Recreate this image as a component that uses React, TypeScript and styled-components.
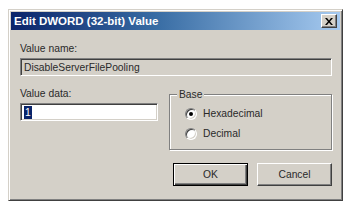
import React from 'react';
import styled, { createGlobalStyle } from 'styled-components';

const GlobalStyle = createGlobalStyle`
  html, body {
    margin: 0;
    padding: 0;
    background: #ffffff;
  }
  body {
    font-family: "Liberation Sans", Arial, sans-serif;
    font-size: 10.3px;
    color: #000000;
  }
`;

const App = () => {
  return (
    <>
      <GlobalStyle />
      <DialogWindow>
        <TitleBar>
          <TitleText>Edit DWORD (32-bit) Value</TitleText>
          <CloseButton>
            <svg width="8" height="7" viewBox="0 0 8 7">
              <path d="M0 0h2l2 2.5L6 0h2L5 3.5 8 7H6L4 4.5 2 7H0l3-3.5z" fill="#000" />
            </svg>
          </CloseButton>
        </TitleBar>
        <Content>
          <FieldLabel>Value name:</FieldLabel>
          <TextField $readOnly>DisableServerFilePooling</TextField>
          <MiddleRow>
            <LeftColumn>
              <FieldLabel>Value data:</FieldLabel>
              <TextField $short>
                <Selected>1</Selected>
              </TextField>
            </LeftColumn>
            <GroupBox>
              <GroupLegend>Base</GroupLegend>
              <RadioRow>
                <RadioCircle $checked />
                <span>Hexadecimal</span>
              </RadioRow>
              <RadioRow>
                <RadioCircle />
                <span>Decimal</span>
              </RadioRow>
            </GroupBox>
          </MiddleRow>
          <ButtonRow>
            <PushButton $default>OK</PushButton>
            <PushButton>Cancel</PushButton>
          </ButtonRow>
        </Content>
      </DialogWindow>
    </>
  );
};

export default App;

const DialogWindow = styled.div`
  margin: 9px 0 0 8px;
  width: 335px;
  height: 192px;
  box-sizing: border-box;
  background: #d4d0c8;
  border-top: 1px solid #d4d0c8;
  border-left: 1px solid #d4d0c8;
  border-right: 1px solid #404040;
  border-bottom: 1px solid #404040;
  box-shadow: inset 1px 1px 0 #ffffff, inset -1px -1px 0 #808080;
  padding: 2px;
  display: flex;
  flex-direction: column;
`;

const TitleBar = styled.div`
  height: 18px;
  display: flex;
  align-items: center;
  justify-content: space-between;
  padding: 0 3px 0 3px;
  background: linear-gradient(to right, #0a246a 0%, #3a6ea5 45%, #a6caf0 100%);
`;

const TitleText = styled.div`
  color: #ffffff;
  font-weight: bold;
  font-size: 11.5px;
`;

const CloseButton = styled.div`
  width: 16px;
  height: 14px;
  box-sizing: border-box;
  display: flex;
  align-items: center;
  justify-content: center;
  background: #d4d0c8;
  border-top: 1px solid #ffffff;
  border-left: 1px solid #ffffff;
  border-right: 1px solid #404040;
  border-bottom: 1px solid #404040;
  box-shadow: inset -1px -1px 0 #808080;
`;

const Content = styled.div`
  display: flex;
  flex-direction: column;
  padding: 12px 8px 0 9px;
`;

const FieldLabel = styled.div`
  line-height: 13px;
  color: #2a2a2a;
`;

const TextField = styled.div<{ $readOnly?: boolean; $short?: boolean }>`
  margin-top: 3px;
  width: ${(p) => (p.$short ? '138px' : '312px')};
  height: 18px;
  box-sizing: border-box;
  display: flex;
  align-items: center;
  padding-left: 3px;
  background: ${(p) => (p.$readOnly ? '#d4d0c8' : '#ffffff')};
  border-top: 1px solid #808080;
  border-left: 1px solid #808080;
  border-right: 1px solid #ffffff;
  border-bottom: 1px solid #ffffff;
  box-shadow: inset 1px 1px 0 #404040, inset -1px -1px 0 #d4d0c8;
  color: #2a2a2a;
`;

const Selected = styled.span`
  background: #0a246a;
  color: #ffffff;
  line-height: 13px;
  padding: 0 1px;
`;

const MiddleRow = styled.div`
  display: flex;
  gap: 11px;
  margin-top: 11px;
`;

const LeftColumn = styled.div`
  display: flex;
  flex-direction: column;
`;

const GroupBox = styled.div`
  position: relative;
  margin-top: 7px;
  width: 164px;
  height: 56px;
  box-sizing: border-box;
  border: 1px solid #808080;
  box-shadow: 1px 1px 0 #ffffff, inset 1px 1px 0 #ffffff;
  display: flex;
  flex-direction: column;
  gap: 7px;
  padding: 12px 0 0 15px;
`;

const GroupLegend = styled.span`
  position: absolute;
  top: -7px;
  left: 7px;
  padding: 0 2px;
  background: #d4d0c8;
  line-height: 13px;
  color: #2a2a2a;
`;

const RadioRow = styled.div`
  display: flex;
  align-items: center;
  gap: 6px;
  line-height: 13px;
  color: #2a2a2a;
`;

const RadioCircle = styled.span<{ $checked?: boolean }>`
  position: relative;
  width: 12px;
  height: 12px;
  box-sizing: border-box;
  border-radius: 50%;
  background: #ffffff;
  border: 1px solid;
  border-color: #808080 #ffffff #ffffff #808080;
  box-shadow: inset 1px 1px 0 #404040, inset -1px -1px 0 #d4d0c8;
  &::after {
    content: '';
    display: ${(p) => (p.$checked ? 'block' : 'none')};
    position: absolute;
    left: 3px;
    top: 3px;
    width: 4px;
    height: 4px;
    border-radius: 50%;
    background: #000000;
  }
`;

const ButtonRow = styled.div`
  display: flex;
  justify-content: flex-end;
  gap: 9px;
  margin-top: 13px;
`;

const PushButton = styled.div<{ $default?: boolean }>`
  width: 75px;
  height: 23px;
  box-sizing: border-box;
  display: flex;
  align-items: center;
  justify-content: center;
  background: #d4d0c8;
  color: #2a2a2a;
  border: 1px solid ${(p) => (p.$default ? '#000000' : '#d4d0c8')};
  box-shadow: inset 1px 1px 0 #ffffff, inset -1px -1px 0 #404040, inset -2px -2px 0 #808080;
  ${(p) => (p.$default ? '' : 'border-top-color: #ffffff; border-left-color: #ffffff; border-right-color: #404040; border-bottom-color: #404040; box-shadow: inset -1px -1px 0 #808080;')}
`;
